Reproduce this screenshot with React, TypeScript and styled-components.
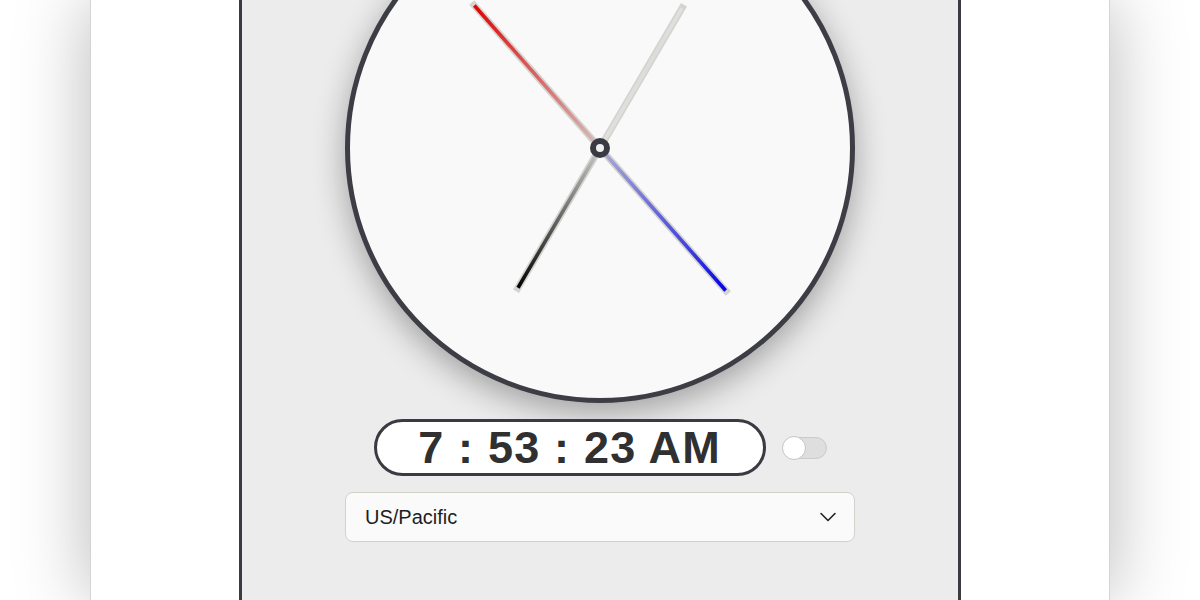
import * as React from 'react';
import styled, { createGlobalStyle } from 'styled-components';
import { ChevronDown } from 'lucide-react';

const GlobalStyle = createGlobalStyle`
  html, body {
    margin: 0;
    padding: 0;
    background: #fff;
    overflow: hidden;
  }
  body {
    font-family: "Liberation Sans", Arial, sans-serif;
  }
`;

const Page = styled.div`
  display: flex;
  justify-content: center;
  min-height: 100vh;
`;

const Card = styled.div`
  width: 1020px;
  box-sizing: border-box;
  background: #fff;
  border-left: 1px solid #d4d4d4;
  border-right: 1px solid #d4d4d4;
  box-shadow: 0 0 70px rgba(0, 0, 0, 0.28);
  display: flex;
  justify-content: center;
`;

const Panel = styled.main`
  width: 722px;
  box-sizing: border-box;
  min-height: 100vh;
  background: #ececec;
  border-left: 3px solid #3a3b40;
  border-right: 3px solid #3a3b40;
  display: flex;
  flex-direction: column;
  align-items: center;
`;

const Face = styled.div`
  margin-top: -107px;
  width: 510px;
  height: 510px;
  box-sizing: border-box;
  border-radius: 50%;
  border: 5px solid #3d3e45;
  background: #f9f9f9;
  box-shadow: 0 10px 32px rgba(0, 0, 0, 0.32);
  flex-shrink: 0;
`;

const Dial = styled.svg`
  display: block;
`;

const Controls = styled.div`
  margin-top: 16px;
  display: flex;
  align-items: center;
  gap: 17px;
`;

const Readout = styled.div`
  width: 392px;
  height: 57px;
  box-sizing: border-box;
  border: 3px solid #3a3b42;
  border-radius: 30px;
  background: #fff;
  display: flex;
  align-items: center;
  justify-content: center;
  font-size: 45px;
  font-weight: 700;
  letter-spacing: 1.2px;
  color: #303030;
`;

const Switch = styled.button<{ $on: boolean }>`
  width: 44px;
  height: 22px;
  padding: 0;
  border-radius: 11px;
  border: 1px solid #cbcbcb;
  background: ${(p) => (p.$on ? '#3a3b42' : '#dedede')};
  display: flex;
  align-items: center;
  justify-content: ${(p) => (p.$on ? 'flex-end' : 'flex-start')};
  cursor: pointer;
`;

const Knob = styled.span`
  width: 24px;
  height: 24px;
  margin: -2px;
  box-sizing: border-box;
  border-radius: 50%;
  border: 1px solid #c4c4c4;
  background: #fff;
`;

const Zone = styled.div`
  margin-top: 16px;
  width: 510px;
  height: 50px;
  box-sizing: border-box;
  padding: 0 12px 0 19px;
  border: 1px solid #d2d2cd;
  border-radius: 8px;
  background: #fafafa;
  display: flex;
  align-items: center;
  justify-content: space-between;
  font-size: 20px;
  color: #1e1e1e;
`;

type HandProps = {
  angle: number;
  length: number;
  grad: string;
};

const C = 250;

function Hand({ angle, length, grad }: HandProps) {
  const tip = C - length;
  return (
    <g transform={`rotate(${angle} ${C} ${C})`}>
      <rect x={C - 3.5} y={tip - 2} width={7} height={length + 2} fill="#d3d3d0" />
      <rect x={C - 1.8} y={tip + 2} width={3.6} height={length - 2} fill={`url(#${grad})`} />
    </g>
  );
}

function Fade({ id, color, from, to, length }: { id: string; color: string; from: number; to: number; length: number }) {
  return (
    <linearGradient id={id} gradientUnits="userSpaceOnUse" x1={C} y1={C - length} x2={C} y2={C}>
      <stop offset="0" stopColor={color} stopOpacity={from} />
      <stop offset="0.3" stopColor={color} stopOpacity={from * 0.7} />
      <stop offset="1" stopColor={color} stopOpacity={to} />
    </linearGradient>
  );
}

function Clock() {
  return (
    <Face>
      <Dial width={500} height={500} viewBox="0 0 500 500">
        <defs>
          <Fade id="min" color="#e00000" from={1} to={0.1} length={192} />
          <Fade id="sec" color="#0000e6" from={1} to={0.18} length={192} />
          <Fade id="hr" color="#000000" from={1} to={0.05} length={164} />
          <Fade id="tail" color="#ffffff" from={0.3} to={0.3} length={164} />
        </defs>
        <Hand angle={30.4} length={164} grad="tail" />
        <Hand angle={210.4} length={164} grad="hr" />
        <Hand angle={-41.4} length={192} grad="min" />
        <Hand angle={138.6} length={192} grad="sec" />
        <circle cx={C} cy={C} r={10} fill="#3a3b42" />
        <circle cx={C} cy={C} r={4} fill="#efefef" />
      </Dial>
    </Face>
  );
}

export default function App() {
  const [on, setOn] = React.useState(false);
  return (
    <Page>
      <GlobalStyle />
      <Card>
        <Panel>
          <Clock />
          <Controls>
            <Readout>7 : 53 : 23 AM</Readout>
            <Switch $on={on} onClick={() => setOn(!on)} aria-label="24 hour">
              <Knob />
            </Switch>
          </Controls>
          <Zone>
            <span>US/Pacific</span>
            <ChevronDown size={28} strokeWidth={1.4} color="#222" />
          </Zone>
        </Panel>
      </Card>
    </Page>
  );
}
